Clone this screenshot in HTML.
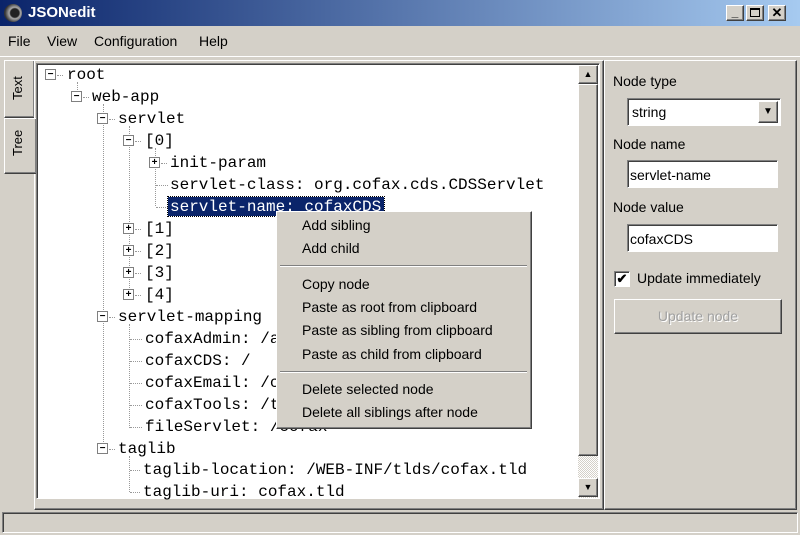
<!DOCTYPE html><html><head><style>
*{box-sizing:border-box;margin:0;padding:0}
body{width:800px;height:535px;background:#d4d0c8;font-family:"Liberation Sans",sans-serif;font-size:14px;position:relative;overflow:hidden;color:#000}
.a{position:absolute}
.raised{border:1px solid;border-color:#fff #404040 #404040 #fff;box-shadow:inset -1px -1px #808080;background:#d4d0c8}
.sunk{border:1px solid;border-color:#808080 #fff #fff #808080;box-shadow:inset 1px 1px #404040}
.t{position:absolute;font-family:"Liberation Mono",monospace;font-size:16px;white-space:nowrap;line-height:18px}
.bx{position:absolute;width:11px;height:11px;border:1px solid #808080;background:#fff;font-size:10px;line-height:9px;text-align:center;font-family:"Liberation Sans";font-weight:bold}
.h{position:absolute;width:8px;border-top:1px dotted #999}
.mi{position:absolute;left:25px;white-space:nowrap}
.lbl{position:absolute;white-space:nowrap}
</style></head><body>
<div class="a" style="left:0;top:0;width:800px;height:26px;background:linear-gradient(90deg,#0a246a,#a6caf0)"></div>
<div class="a" style="left:4px;top:4px;width:18px;height:18px;border-radius:50%;background:radial-gradient(circle at 60% 50%,#222 30%,#aaa 40%,#333 70%)"></div>
<div class="a" style="left:28px;top:4px;color:#fff;font-weight:bold;font-size:15px">JSONedit</div>
<div class="a raised" style="left:726px;top:5px;width:18px;height:16px;font-size:12px;font-weight:bold;text-align:center;line-height:12px">_</div>
<div class="a raised" style="left:746px;top:5px;width:18px;height:16px"><div class="a" style="left:3px;top:2px;width:10px;height:9px;border:1px solid #000;border-top-width:2px"></div></div>
<div class="a raised" style="left:768px;top:5px;width:18px;height:16px;font-size:13px;font-weight:bold;text-align:center;line-height:13px">✕</div>
<div class="a" style="left:8px;top:33px">File</div>
<div class="a" style="left:47px;top:33px">View</div>
<div class="a" style="left:94px;top:33px">Configuration</div>
<div class="a" style="left:199px;top:33px">Help</div>
<div class="a" style="left:0;top:56px;width:800px;border-top:1px solid #fff"></div>
<div class="a raised" style="left:4px;top:60px;width:30px;height:58px;border-right:none"></div>
<div class="a" style="left:10px;top:100px;transform:rotate(-90deg);transform-origin:0 0;font-size:13px">Text</div>
<div class="a raised" style="left:4px;top:118px;width:32px;height:56px;border-right:none;z-index:2"></div>
<div class="a" style="left:10px;top:156px;transform:rotate(-90deg);transform-origin:0 0;font-size:13px;z-index:3">Tree</div>
<div class="a raised" style="left:34px;top:60px;width:570px;height:450px"></div>
<div class="a sunk" style="left:36px;top:63px;width:564px;height:436px;background:#fff"></div>
<div class="a" style="left:578px;top:65px;width:20px;height:433px;background:repeating-conic-gradient(#d4d0c8 0 25%,#fff 0 50%) 0 0/2px 2px"></div>
<div class="a raised" style="left:578px;top:65px;width:20px;height:19px;font-size:9px;text-align:center;line-height:17px">▲</div>
<div class="a raised" style="left:578px;top:84px;width:20px;height:372px"></div>
<div class="a raised" style="left:578px;top:478px;width:20px;height:19px;font-size:9px;text-align:center;line-height:17px">▼</div>
<div class="a" style="left:77px;top:82px;height:10px;border-left:1px dotted #999"></div>
<div class="a" style="left:103px;top:104px;height:340px;border-left:1px dotted #999"></div>
<div class="a" style="left:129px;top:126px;height:164px;border-left:1px dotted #999"></div>
<div class="a" style="left:155px;top:148px;height:58px;border-left:1px dotted #999"></div>
<div class="a" style="left:129px;top:324px;height:104px;border-left:1px dotted #999"></div>
<div class="a" style="left:129px;top:456px;height:36px;border-left:1px dotted #999"></div>
<div class="h" style="left:57px;top:75px;width:6px"></div>
<div class="h" style="left:83px;top:97px;width:6px"></div>
<div class="h" style="left:109px;top:119px;width:6px"></div>
<div class="h" style="left:135px;top:141px;width:6px"></div>
<div class="h" style="left:161px;top:163px;width:6px"></div>
<div class="h" style="left:156px;top:185px;width:12px"></div>
<div class="h" style="left:156px;top:207px;width:12px"></div>
<div class="h" style="left:135px;top:229px;width:6px"></div>
<div class="h" style="left:135px;top:251px;width:6px"></div>
<div class="h" style="left:135px;top:273px;width:6px"></div>
<div class="h" style="left:135px;top:295px;width:6px"></div>
<div class="h" style="left:109px;top:317px;width:6px"></div>
<div class="h" style="left:130px;top:339px;width:12px"></div>
<div class="h" style="left:130px;top:361px;width:12px"></div>
<div class="h" style="left:130px;top:383px;width:12px"></div>
<div class="h" style="left:130px;top:405px;width:12px"></div>
<div class="h" style="left:130px;top:427px;width:12px"></div>
<div class="h" style="left:109px;top:449px;width:6px"></div>
<div class="h" style="left:130px;top:470px;width:10px"></div>
<div class="h" style="left:130px;top:492px;width:10px"></div>
<div class="bx" style="left:45px;top:69px">−</div><div class="t" style="left:67px;top:66px">root</div>
<div class="bx" style="left:71px;top:91px">−</div><div class="t" style="left:92px;top:88px">web-app</div>
<div class="bx" style="left:97px;top:113px">−</div><div class="t" style="left:118px;top:110px">servlet</div>
<div class="bx" style="left:123px;top:135px">−</div><div class="t" style="left:145px;top:132px">[0]</div>
<div class="bx" style="left:149px;top:157px">+</div><div class="t" style="left:170px;top:154px">init-param</div>
<div class="t" style="left:170px;top:176px">servlet-class: org.cofax.cds.CDSServlet</div>
<div class="a" style="left:168px;top:197px;width:216px;height:19px;background:#0a246a;outline:1px dotted #000"></div>
<div class="t" style="left:170px;top:198px;color:#fff">servlet-name: cofaxCDS</div>
<div class="bx" style="left:123px;top:223px">+</div><div class="t" style="left:145px;top:220px">[1]</div>
<div class="bx" style="left:123px;top:245px">+</div><div class="t" style="left:145px;top:242px">[2]</div>
<div class="bx" style="left:123px;top:267px">+</div><div class="t" style="left:145px;top:264px">[3]</div>
<div class="bx" style="left:123px;top:289px">+</div><div class="t" style="left:145px;top:286px">[4]</div>
<div class="bx" style="left:97px;top:311px">−</div><div class="t" style="left:118px;top:308px">servlet-mapping</div>
<div class="t" style="left:145px;top:330px">cofaxAdmin: /a</div>
<div class="t" style="left:145px;top:352px">cofaxCDS: /</div>
<div class="t" style="left:145px;top:374px">cofaxEmail: /c</div>
<div class="t" style="left:145px;top:396px">cofaxTools: /t</div>
<div class="t" style="left:145px;top:418px">fileServlet: /cofax</div>
<div class="bx" style="left:97px;top:443px">−</div><div class="t" style="left:118px;top:440px">taglib</div>
<div class="t" style="left:143px;top:461px">taglib-location: /WEB-INF/tlds/cofax.tld</div>
<div class="t" style="left:143px;top:483px">taglib-uri: cofax.tld</div>
<div class="a raised" style="left:276px;top:211px;width:256px;height:218px">
<div class="mi" style="top:5px">Add sibling</div>
<div class="mi" style="top:28px">Add child</div>
<div class="a" style="left:3px;top:53px;width:247px;border-top:1px solid #808080;border-bottom:1px solid #fff"></div>
<div class="mi" style="top:64px">Copy node</div>
<div class="mi" style="top:87px">Paste as root from clipboard</div>
<div class="mi" style="top:110px">Paste as sibling from clipboard</div>
<div class="mi" style="top:134px">Paste as child from clipboard</div>
<div class="a" style="left:3px;top:159px;width:247px;border-top:1px solid #808080;border-bottom:1px solid #fff"></div>
<div class="mi" style="top:169px">Delete selected node</div>
<div class="mi" style="top:192px">Delete all siblings after node</div>
</div>
<div class="a raised" style="left:604px;top:60px;width:193px;height:450px"></div>
<div class="lbl" style="left:613px;top:73px">Node type</div>
<div class="a sunk" style="left:627px;top:98px;width:154px;height:28px;background:#fff"><div class="a" style="left:4px;top:5px">string</div>
<div class="a raised" style="left:130px;top:2px;width:20px;height:22px;font-size:10px;text-align:center;line-height:20px">▼</div></div>
<div class="lbl" style="left:613px;top:136px">Node name</div>
<div class="a sunk" style="left:627px;top:160px;width:151px;height:28px;background:#fff"><div class="a" style="left:2px;top:6px">servlet-name</div></div>
<div class="lbl" style="left:613px;top:199px">Node value</div>
<div class="a sunk" style="left:627px;top:224px;width:151px;height:28px;background:#fff"><div class="a" style="left:2px;top:6px">cofaxCDS</div></div>
<div class="a sunk" style="left:614px;top:271px;width:16px;height:16px;background:#fff;font-size:13px;font-weight:bold;line-height:14px;text-align:center">✔</div>
<div class="lbl" style="left:637px;top:270px">Update immediately</div>
<div class="a raised" style="left:614px;top:299px;width:168px;height:35px;text-align:center;line-height:32px;color:#a0a0a0;text-shadow:1px 1px #fff">Update node</div>
<div class="a sunk" style="left:2px;top:512px;width:796px;height:21px"></div>
</body></html>
